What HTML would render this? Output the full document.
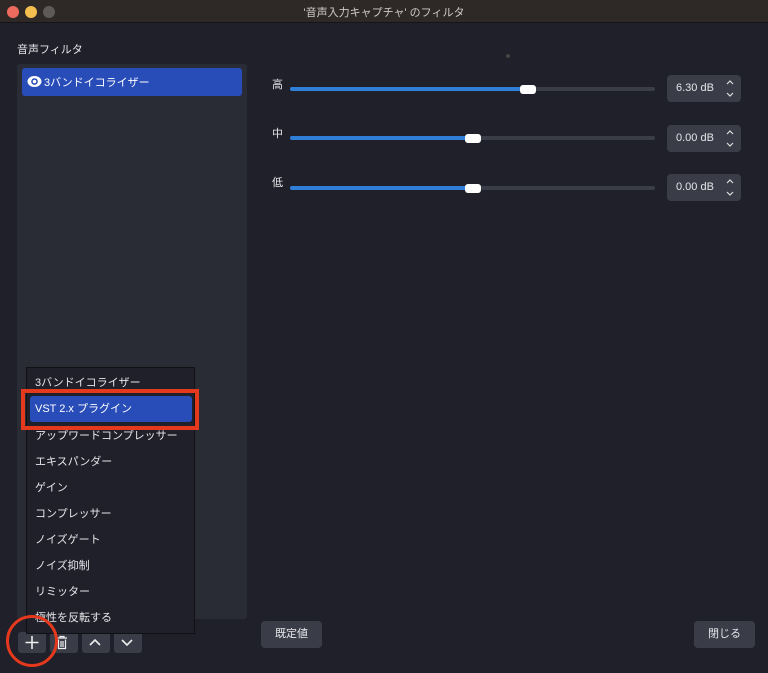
<!DOCTYPE html>
<html><head><meta charset="utf-8"><style>
*{margin:0;padding:0;box-sizing:border-box}
body{width:768px;height:673px;background:#1f2029;font-family:"Liberation Sans","Noto Sans CJK JP",sans-serif;color:#e6e6ea;font-size:11px;position:relative;overflow:hidden}
.abs{position:absolute}
.title{left:0;top:0;width:768px;height:23px;background:#2e2826;border-bottom:1px solid #151515}
.dot{top:6px;width:12px;height:12px;border-radius:50%}
.track{left:290px;width:365px;height:4px;border-radius:2px;background:#3a3c48}
.fill{left:0;top:0;height:4px;border-radius:2px;background:#2f7ed8;position:absolute}
.handle{width:16px;height:9px;border-radius:3px;background:#fff;top:-2.5px;position:absolute}
.spin{left:667px;width:74px;height:27px;background:#3a3c48;border-radius:4px;font-size:11px;line-height:27px;padding-left:9px}
.btn{background:#3a3c48;border-radius:4px;text-align:center;line-height:27px;font-size:11px}
.mi{left:35px;font-size:11px}
.sb{width:28px;height:21px;background:#3a3c48;border-radius:3px;top:632px}
</style></head><body>
<div class="abs title"></div>
<div class="abs dot" style="left:7px;background:#ec6a5e"></div>
<div class="abs dot" style="left:25px;background:#f4bf4f"></div>
<div class="abs dot" style="left:43px;background:#5d5a58"></div>
<div class="abs" style="left:0;width:768px;top:4px;text-align:center;font-size:11px;color:#cfcbc8">'音声入力キャプチャ' のフィルタ</div>

<div class="abs" style="left:17px;top:41px;font-size:11px">音声フィルタ</div>
<div class="abs" style="left:17px;top:64px;width:230px;height:555px;background:#292b35;border-radius:3px"></div>
<div class="abs" style="left:22px;top:68px;width:220px;height:28px;background:#284cb8;border-radius:3px"></div>
<svg class="abs" style="left:27px;top:75px" width="15" height="13" viewBox="0 0 15 13"><ellipse cx="7.5" cy="6.5" rx="7" ry="5.5" fill="#fff"/><circle cx="7.5" cy="6.5" r="3.3" fill="#284cb8"/><circle cx="7.5" cy="6.5" r="1.8" fill="#fff"/></svg>
<div class="abs" style="left:44px;top:74px;font-size:11px;color:#fff">3バンドイコライザー</div>
<div class="abs" style="left:506px;top:54px;width:4px;height:4px;border-radius:50%;background:#444"></div>

<div class="abs" style="left:272px;top:76px">高</div>
<div class="abs track" style="top:87px"><div class="fill" style="width:238px"></div><div class="handle" style="left:230px"></div></div>
<div class="abs spin" style="top:75px">6.30 dB</div>
<div class="abs" style="left:272px;top:125px">中</div>
<div class="abs track" style="top:136px"><div class="fill" style="width:183px"></div><div class="handle" style="left:175px"></div></div>
<div class="abs spin" style="top:125px">0.00 dB</div>
<div class="abs" style="left:272px;top:174px">低</div>
<div class="abs track" style="top:186px"><div class="fill" style="width:183px"></div><div class="handle" style="left:175px"></div></div>
<div class="abs spin" style="top:174px">0.00 dB</div>
<svg class="abs" style="left:724px;top:78px" width="12" height="150" viewBox="0 0 12 150" fill="none" stroke="#ddd" stroke-width="1.2">
<path d="M3 6l3-3 3 3M3 15l3 3 3-3"/><path d="M3 56l3-3 3 3M3 65l3 3 3-3"/><path d="M3 105l3-3 3 3M3 114l3 3 3-3"/></svg>

<div class="abs btn" style="left:261px;top:621px;width:61px;height:27px">既定値</div>
<div class="abs btn" style="left:694px;top:621px;width:61px;height:27px">閉じる</div>

<div class="abs sb" style="left:18px"></div>
<div class="abs sb" style="left:50px"></div>
<div class="abs sb" style="left:82px"></div>
<div class="abs sb" style="left:114px"></div>
<svg class="abs" style="left:18px;top:632px" width="124" height="21" fill="none" stroke="#eee" stroke-width="1.6">
<path d="M14 4v13M7.5 10.5h13"/><path d="M39 6h10M42 6v-1.5h4V6M40.5 7.5v9h7v-9M43 9v6M45 9v6" stroke-width="1.2"/>
<path d="M72 13l5-5 5 5"/><path d="M104 8l5 5 5-5"/></svg>

<div class="abs" style="left:26px;top:367px;width:169px;height:267px;background:#1f2029;border:1px solid #101015"></div>
<div class="abs" style="left:30px;top:396px;width:162px;height:26px;background:#284cb8;border-radius:3px"></div>
<div class="abs" style="left:21px;top:389px;width:178px;height:41px;border:4px solid #e5391e"></div>
<div class="abs mi" style="top:374px">3バンドイコライザー</div>
<div class="abs mi" style="top:400px;color:#fff">VST 2.x プラグイン</div>
<div class="abs mi" style="top:427px">アップワードコンプレッサー</div>
<div class="abs mi" style="top:453px">エキスパンダー</div>
<div class="abs mi" style="top:479px">ゲイン</div>
<div class="abs mi" style="top:505px">コンプレッサー</div>
<div class="abs mi" style="top:531px">ノイズゲート</div>
<div class="abs mi" style="top:557px">ノイズ抑制</div>
<div class="abs mi" style="top:583px">リミッター</div>
<div class="abs mi" style="top:609px">極性を反転する</div>
<div class="abs" style="left:6px;top:615px;width:52px;height:52px;border:3px solid #e5391e;border-radius:50%"></div>
</body></html>
